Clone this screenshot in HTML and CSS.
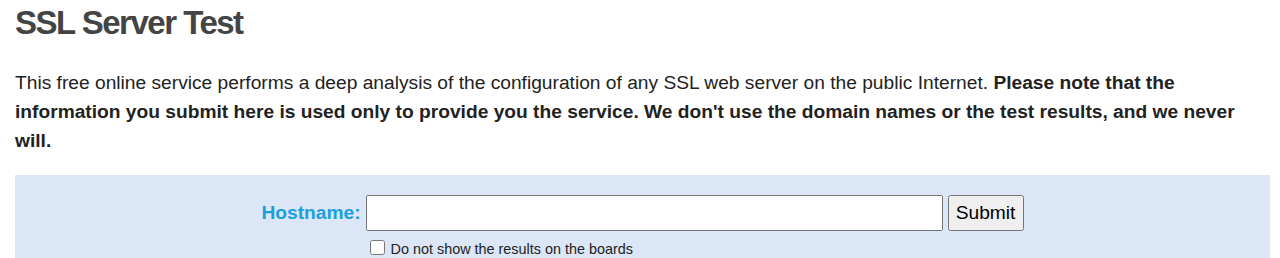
FILE: index.html
```html
<!DOCTYPE html>
<html lang="en">
<head>
  <meta charset="UTF-8">
  <title>SSL Server Test</title>
  <link rel="stylesheet" href="styles.css">
</head>
<body>
  <div class="page">
    <h1>SSL Server Test</h1>
    <p class="intro">
      This free online service performs a deep analysis of the configuration of any SSL web server on the public Internet.
      <b>Please note that the information you submit here is used only to provide you the service. We don't use the domain names or the test results, and we never will.</b>
    </p>

    <!-- Submit form -->
    <form class="submit-box" method="GET" action="analyze.html">
      <div class="form-row">
        <label for="hostname" class="label">Hostname:</label>
        <div class="fields">
          <div class="field-line">
            <input type="text" name="d" id="hostname" class="host-input">
            <button type="submit" class="submit-btn">Submit</button>
          </div>
          <div class="check-line">
            <input type="checkbox" name="hideResults" id="hideResults">
            <label for="hideResults">Do not show the results on the boards</label>
          </div>
        </div>
      </div>
    </form>
  </div>
</body>
</html>
```

FILE: styles.css
```css
/* General Styling */
html {
  font-family: "Liberation Sans", Arial, sans-serif;
}
body {
  margin: 0;
  color: #222;
}
.page {
  padding: 0 10px 0 15px;
}
h1 {
  font-size: 33px;
  letter-spacing: -1.5px;
  color: #444;
  margin: 0;
  padding-top: 4px;
  line-height: 38px;
}
.intro {
  font-size: 19.2px;
  line-height: 29px;
  margin: 26px 0 20px;
}
.submit-box {
  background: #dbe6f6;
  padding: 20px 0 30px;
  margin: 0;
}
.form-row {
  display: flex;
  justify-content: center;
  align-items: flex-start;
  gap: 5px;
}
.label {
  font-size: 19.2px;
  font-weight: bold;
  color: #1a9fe0;
  line-height: 36px;
}
.field-line {
  display: flex;
  gap: 5px;
}
.host-input {
  width: 577px;
  height: 36px;
  box-sizing: border-box;
  font-size: 19.2px;
  margin: 0;
}
.submit-btn {
  font-family: "Liberation Sans", Arial, sans-serif;
  font-size: 19.2px;
  height: 36px;
  width: 76px;
  padding: 0;
  margin: 0;
}
.check-line {
  display: flex;
  align-items: flex-end;
  font-size: 14.4px;
  margin-top: 8px;
}
.check-line input {
  width: 15px;
  height: 15px;
  margin: 0 6px 0 4px;
}
.check-line label {
  line-height: 16px;
  position: relative;
  top: 2px;
}
```
